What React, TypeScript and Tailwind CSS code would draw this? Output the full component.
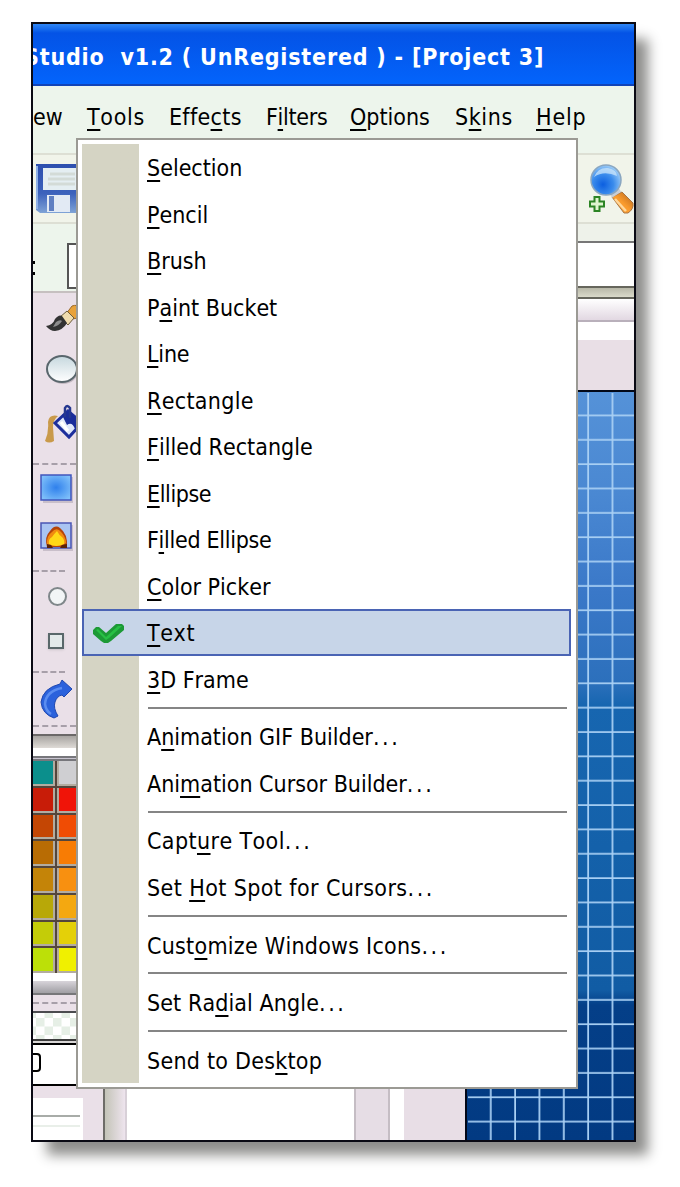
import clsx from "clsx";

const uiFont =
  "font-['DejaVu_Sans_Condensed','DejaVu_Sans',Tahoma,sans-serif] [font-stretch:condensed] [font-kerning:none]";

type Item = { label: string; tracking?: string; checked?: boolean };

// "&" goes before the letter that is underlined
const groups: Item[][] = [
  [
    { label: "&Selection" },
    { label: "&Pencil" },
    { label: "&Brush" },
    { label: "P&aint Bucket" },
    { label: "&Line", tracking: "tracking-[-0.2px]" },
    { label: "&Rectangle", tracking: "tracking-[0.3px]" },
    { label: "&Filled Rectangle" },
    { label: "&Ellipse", tracking: "tracking-[-0.4px]" },
    { label: "F&illed Ellipse", tracking: "tracking-[-0.3px]" },
    { label: "&Color Picker" },
    { label: "&Text", tracking: "tracking-[0.6px]", checked: true },
    { label: "&3D Frame" },
  ],
  [
    { label: "A&nimation GIF Builder..." },
    { label: "Ani&mation Cursor Builder..." },
  ],
  [
    { label: "Capt&ure Tool...", tracking: "tracking-[0.4px]" },
    { label: "Set &Hot Spot for Cursors...", tracking: "tracking-[0.4px]" },
  ],
  [{ label: "Cust&omize Windows Icons...", tracking: "tracking-[0.25px]" }],
  [{ label: "Set Ra&dial Angle...", tracking: "tracking-[0.1px]" }],
  [{ label: "Send to Des&ktop", tracking: "tracking-[0.25px]" }],
];

const menuBar = [
  { label: "ew", width: "w-[54px]" },
  { label: "&Tools", width: "w-[82px] tracking-[0.7px]" },
  { label: "Effe&cts", width: "w-[97px] tracking-[0.3px]" },
  { label: "F&ilters", width: "w-[84px] tracking-[-0.3px]" },
  { label: "&Options", width: "w-[105px]" },
  { label: "S&kins", width: "w-[81px] tracking-[0.6px]" },
  { label: "&Help", width: "w-[60px] tracking-[0.8px]" },
];

const palette = [
  ["bg-[#0b8f8c]", "bg-[#cfcfd2]"],
  ["bg-[#c81c08]", "bg-[#f01408]"],
  ["bg-[#c44604]", "bg-[#f04c04]"],
  ["bg-[#b86c04]", "bg-[#f87c04]"],
  ["bg-[#c48408]", "bg-[#f89010]"],
  ["bg-[#b8a808]", "bg-[#f4a810]"],
  ["bg-[#c4cc08]", "bg-[#e4d008]"],
  ["bg-[#bce008]", "bg-[#f0f000]"],
];

const Mnemonic = ({ text }: { text: string }) => {
  const dots = text.endsWith("...");
  const label = dots ? text.slice(0, -3) : text;
  const i = label.indexOf("&");
  return (
    <>
      {i < 0 ? label : label.slice(0, i)}
      {i >= 0 && (
        <span className="underline decoration-2 underline-offset-4 [text-decoration-skip-ink:none]">
          {label[i + 1]}
        </span>
      )}
      {i >= 0 && label.slice(i + 2)}
      {dots && <span className="tracking-[2.6px]">...</span>}
    </>
  );
};

const SaveIcon = () => (
  <svg width="44" height="52" viewBox="0 0 44 52" className="shrink-0">
    <defs>
      <linearGradient id="save" x1="0" y1="0" x2="0" y2="1">
        <stop offset="0" stopColor="#2d4fae" />
        <stop offset="0.6" stopColor="#3c62bc" />
        <stop offset="1" stopColor="#7fa3d6" />
      </linearGradient>
    </defs>
    <path d="M1 1H44V50H5L1 47Z" fill="url(#save)" />
    <path d="M2 3V46" stroke="#8fb0e8" strokeWidth="2" />
    <rect x="8" y="5" width="36" height="22" fill="#e4eef2" />
    <path d="M15 11H40M13 16H40M13 21H40" stroke="#d3dbd7" strokeWidth="3" />
    <rect x="12" y="32" width="23" height="17" fill="#e2eaf4" />
    <rect x="14" y="33" width="5" height="15" fill="#5f7fc2" />
  </svg>
);

const ZoomInIcon = () => (
  <svg width="48" height="52" viewBox="0 0 48 52" className="shrink-0">
    <defs>
      <radialGradient id="lens" cx="0.4" cy="0.65" r="0.7">
        <stop offset="0" stopColor="#0c5fe0" />
        <stop offset="0.5" stopColor="#3b8cec" />
        <stop offset="1" stopColor="#a9d4f8" />
      </radialGradient>
      <linearGradient id="handle" x1="0" y1="1" x2="1" y2="0">
        <stop offset="0" stopColor="#ffb04a" />
        <stop offset="0.5" stopColor="#f99a2c" />
        <stop offset="1" stopColor="#b0601c" />
      </linearGradient>
    </defs>
    <path d="M26 34L36 29L47 40Q48 46 42 50L38 50Z" fill="url(#handle)" stroke="#a87444" />
    <path d="M29 36L40 48" stroke="#ffd79a" strokeWidth="2.5" />
    <path d="M25 33L34 27" stroke="#c9ced6" strokeWidth="4" />
    <circle cx="20" cy="17" r="15" fill="url(#lens)" stroke="#8aa6c0" strokeWidth="1.5" />
    <path d="M8 14Q12 4 22 5Q31 7 31 13Q18 7 8 14Z" fill="#cbe6fb" opacity="0.75" />
    <path
      d="M8.500 34H13.500V38.500H18V43.500H13.500V48H8.500V43.500H4V38.500H8.500Z"
      fill="#dff5cf"
      stroke="#2c8424"
      strokeWidth="2"
    />
  </svg>
);

const BrushIcon = () => (
  <svg width="34" height="30" viewBox="0 0 34 30">
    <path d="M22 10L28 2Q34 0 34 4V14L28 15Z" fill="#e8a23a" stroke="#9c6a28" />
    <path d="M16 13L23 7L30 14L24 21Z" fill="#f0dcae" stroke="#6b5c3c" />
    <path d="M2 22Q9 21 11 15Q15 10 18 12L23 19Q19 26 11 27Q6 27 2 22Z" fill="#333" />
    <path d="M12 18Q16 15 18 17Q15 22 9 23Z" fill="#8d8d8d" />
  </svg>
);

const EllipseIcon = () => (
  <svg width="32" height="32" viewBox="0 0 32 32">
    <defs>
      <linearGradient id="oval" x1="0" y1="0" x2="0" y2="1">
        <stop offset="0" stopColor="#c6d8de" />
        <stop offset="1" stopColor="#fff" />
      </linearGradient>
    </defs>
    <ellipse cx="17" cy="17" rx="15" ry="13" fill="#c3b9c2" />
    <ellipse cx="16" cy="15" rx="15" ry="13" fill="url(#oval)" stroke="#59666c" strokeWidth="2" />
  </svg>
);

const BucketIcon = () => (
  <svg width="34" height="40" viewBox="0 0 34 40">
    <path d="M1 38Q5 29 4 19Q5 11 14 13Q9 17 9 24L10 38Q5 41 1 38Z" fill="#c99a4a" />
    <path d="M11 20L24 8L38 20L25 34Z" fill="#dfe8fa" stroke="#1d2f9c" strokeWidth="3" />
    <path d="M18 12L25 8L36 20L31 26Q28 18 23 22Z" fill="#1a2d9a" />
    <path d="M21 14V5Q23 1 26 5V15" fill="none" stroke="#24378f" strokeWidth="2.5" />
    <path d="M17 19L24 28" stroke="#fff" strokeWidth="3" />
  </svg>
);

const GradientIcon = () => (
  <svg width="34" height="29" viewBox="0 0 34 29">
    <defs>
      <radialGradient id="blue" cx="0.5" cy="0.5" r="0.6">
        <stop offset="0" stopColor="#2f80ec" />
        <stop offset="1" stopColor="#7fc0fa" />
      </radialGradient>
    </defs>
    <rect x="3" y="3" width="30" height="26" fill="#c9bfca" />
    <rect x="1" y="1" width="30" height="25" fill="url(#blue)" stroke="#4256bc" strokeWidth="1.5" />
  </svg>
);

const FlameIcon = () => (
  <svg width="34" height="29" viewBox="0 0 34 29">
    <rect x="3" y="3" width="30" height="26" fill="#c9bfca" />
    <rect x="1" y="1" width="30" height="25" fill="#a9c4f2" stroke="#4a55b4" strokeWidth="1.5" />
    <path d="M7 25Q4 15 10 9Q15 2 20 6Q28 12 27 25Z" fill="#b4440a" />
    <path d="M7 23Q6 14 12 10Q15 6 19 8Q26 14 26 21Q22 25 7 23Z" fill="#f08a10" />
    <path d="M9 22Q8 17 12 15Q15 11 17 9Q19 13 22 15Q25 18 24 22Q16 26 9 22Z" fill="#ffd818" />
    <path d="M7 26V22L11 23L13 26ZM20 26L22 23L27 22V26Z" fill="#5c2408" />
  </svg>
);

const UndoIcon = () => (
  <svg width="34" height="41" viewBox="0 0 34 41">
    <path
      d="M32 10L22 1L20 5Q3 9 1 23Q2 35 14 39L18 37Q13 29 15 23Q17 17 22 16L24 18Z"
      fill="#2b62dc"
      stroke="#2048b0"
    />
    <path d="M22 9Q6 12 5 25Q6 32 11 35" fill="none" stroke="#5b8df0" strokeWidth="2.5" />
  </svg>
);

const CheckIcon = () => (
  <svg width="34" height="24" viewBox="0 0 34 24">
    <path d="M1 8L4 5H7L14 11L24 2H30L32 4V8L19 19L16 21H12L9 19L1 12Z" fill="#1c9a36" />
    <path d="M4 8L6 7L14 15L26 4L30 4L17 16L14 18Z" fill="#27c044" />
  </svg>
);

const Checkerboard = () => (
  <svg width="43" height="26" className="shrink-0">
    <defs>
      <pattern id="checker" width="17" height="17" patternUnits="userSpaceOnUse" x="3" y="5">
        <rect width="17" height="17" fill="#fff" />
        <rect width="8.5" height="8.5" fill="#e6efe6" />
        <rect x="8.5" y="8.5" width="8.5" height="8.5" fill="#e6efe6" />
      </pattern>
    </defs>
    <rect width="43" height="26" fill="url(#checker)" />
  </svg>
);

const Canvas = () => (
  <svg width="169" height="750" className="shrink-0">
    <defs>
      <linearGradient id="sky" x1="0" y1="0" x2="0" y2="1">
        <stop offset="0" stopColor="#5592d8" />
        <stop offset="0.14" stopColor="#4a88d2" />
        <stop offset="0.27" stopColor="#3a78c8" />
        <stop offset="0.39" stopColor="#2c70bc" />
        <stop offset="0.42" stopColor="#1766b0" />
        <stop offset="0.8" stopColor="#115ca4" />
        <stop offset="0.82" stopColor="#043f88" />
        <stop offset="1" stopColor="#023a82" />
      </linearGradient>
      <pattern id="grid" x="2.3" y="2" width="24.35" height="24.35" patternUnits="userSpaceOnUse">
        <path d="M24.3 0V24.35M0 24.3H24.35" stroke="#a9d0f4" strokeWidth="3.4" />
      </pattern>
    </defs>
    <rect width="169" height="750" fill="url(#sky)" />
    <rect x="3" y="3" width="166" height="747" fill="url(#grid)" />
    <path d="M0 1H169M1 0V750" stroke="#020818" strokeWidth="2" />
  </svg>
);

const Dashes = ({ className }: { className?: string }) => (
  <div className={clsx("h-0 w-[43px] border-t-2 border-dashed border-[#a79fa9]", className)} />
);

// Toolbox, palette and status boxes down the left edge
const Toolbox = () => (
  <div className="flex w-[70px] shrink-0 flex-col bg-[#eae0e8]">
    <div className="flex h-[69px] shrink-0 items-center border-b-2 border-[#c6c0c0] bg-[#edf5ec]">
      <div className="flex w-[34px] flex-col gap-2 pt-5">
        <span className="h-[3px] w-0.5 bg-black" />
        <span className="h-[3px] w-0.5 bg-black" />
      </div>
      <div className="mt-4 h-[46px] w-9 border-2 border-[#555] bg-white" />
    </div>
    <div className="flex h-[170px] shrink-0 flex-col pl-[11px] pt-[11px]">
      <BrushIcon />
      <div className="ml-0.5 mt-5">
        <EllipseIcon />
      </div>
      <div className="mt-[17px]">
        <BucketIcon />
      </div>
    </div>
    <Dashes />
    <div className="flex h-[105px] shrink-0 flex-col gap-[19px] pl-[7px] pt-[9px]">
      <GradientIcon />
      <FlameIcon />
    </div>
    <Dashes className="w-8!" />
    <div className="flex h-[99px] shrink-0 flex-col items-start gap-[27px] pl-[15px] pt-[15px]">
      <span className="size-[19px] rounded-full border-2 border-[#7f878a] bg-[#f2f5f6]" />
      <span className="size-4 border-2 border-[#59686a] bg-[#e3eaea] shadow-sm" />
    </div>
    <Dashes className="w-8!" />
    <div className="h-[52px] shrink-0 pl-[7px] pt-1.5">
      <UndoIcon />
    </div>
    <Dashes />
    <div className="mt-[7px] h-[14px] shrink-0 border-t-2 border-[#6b6868] bg-linear-to-b from-[#a8a5a2] to-[#dedad6]" />
    <div className="h-2 shrink-0 bg-white" />
    <div className="h-[5px] shrink-0 border-y-2 border-[#77777c] bg-[#c8c4d0]" />
    <div className="grid h-[212px] w-[43px] shrink-0 grid-cols-[22px_1fr] grid-rows-8 gap-x-0.5 gap-y-0.5 bg-[#54463c]">
      {palette.map(([a, b], i) => [
        <div key={`a${i}`} className={clsx("border-r-2 border-b-2 border-[#b3aca0]", a)} />,
        <div key={`b${i}`} className={clsx("border-l-2 border-b-2 border-[#b3aca0]", b)} />,
      ])}
    </div>
    <div className="h-2 shrink-0 bg-white" />
    <div className="h-[14px] shrink-0 border-b-2 border-[#77777a] bg-linear-to-b from-[#d8d4da] to-[#a09fa4]" />
    <div className="h-[18px] shrink-0 border-b-2 border-[#4b4b4f] pt-[7px]">
      <Dashes />
    </div>
    <Checkerboard />
    <div className="h-1 shrink-0 border-t-2 border-[#3c3c3c] bg-[#d8d6d6]" />
    <div className="h-[43px] w-11 shrink-0 overflow-hidden border-y-2 border-black bg-white">
      <div className="-ml-1 mt-2 h-[19px] w-3 rounded-sm border-2 border-black" />
    </div>
    <div className="mt-3 w-[50px] flex-1 bg-white pt-[17px]">
      <div className="h-0.5 w-[47px] bg-[#a8aca8]" />
      <div className="mt-2 h-0.5 w-[47px] bg-[#e9efe9]" />
    </div>
  </div>
);

const Workspace = () => (
  <div className="flex flex-1 flex-col">
    <div className="h-[19px] shrink-0 border-b-2 border-[#777] bg-[#eef2ea]" />
    <div className="h-[43px] shrink-0 bg-white" />
    <div className="h-[13px] shrink-0 border-t-2 border-b-2 border-[#66665c] bg-linear-to-b from-[#b8b8a8] to-[#dadaca]" />
    <div className="h-[23px] shrink-0 border-b-2 border-[#b9b0bb] bg-linear-to-b from-white to-[#e2d8e2]" />
    <div className="h-[18px] shrink-0 bg-white" />
    <div className="h-[50px] shrink-0 bg-[#e9dfe6]" />
    <div className="flex flex-1 bg-white">
      <div className="w-6 border-r-2 border-l-2 border-l-[#6e6c68] border-r-[#d8d0d8] bg-linear-to-r from-[#c4c4b8] to-[#eee4ee]" />
      <div className="w-[227px]" />
      <div className="w-9 border-x-2 border-[#c5bdc4] bg-[#e6dde5]" />
      <div className="w-[14px]" />
      <div className="flex-1 bg-[#e8dee6]" />
      <Canvas />
    </div>
  </div>
);

const ToolsMenu = () => (
  <div className="absolute left-[43px] top-[114px] w-[502px] border-2 border-[#9b9a94] bg-white py-1 pl-1 pr-[5px]">
    <div className="bg-linear-to-r from-[#d5d4c4] from-[57px] to-white to-[57px]">
      {groups.map((group, g) => (
        <div key={g}>
          {g > 0 && (
            <div className="ml-[66px] mr-1 flex h-[11.1px] items-center">
              <div className="h-0.5 w-full bg-[#858585]" />
            </div>
          )}
          {group.map(({ label, tracking, checked }) => (
            <div
              key={label}
              className={clsx(
                "flex h-[46.5px] items-center",
                checked && "bg-[#c7d5e8] outline-2 -outline-offset-2 outline-[#4a64b4]"
              )}
            >
              <div className="w-[65px] pl-2.5 pt-1">{checked && <CheckIcon />}</div>
              <span className={clsx("whitespace-pre pt-[3px] text-[23px] leading-none", tracking)}>
                <Mnemonic text={label} />
              </span>
            </div>
          ))}
        </div>
      ))}
    </div>
  </div>
);

export default function App() {
  return (
    <div className={clsx("h-[1187px] w-[680px] overflow-hidden bg-white pl-[31px] pt-[22px] text-black", uiFont)}>
      <div className="h-[1120px] w-[605px] border-2 border-[#0a0a14] shadow-[14px_15px_12px_-2px_#8e8e8c]">
        <div className="relative flex h-full flex-col overflow-hidden">
          <div className="flex h-[62px] shrink-0 items-center border-b-2 border-[#1144b8] bg-linear-to-b from-[#2f86f4] via-[#0453e6] via-15% to-[#0364fc] pt-1.5">
            <span className="-ml-[9px] whitespace-pre text-[23px] leading-none font-bold tracking-[0.8px] text-white">
              {"Studio  v1.2 ( UnRegistered ) - [Project 3]"}
            </span>
          </div>
          <div className="flex h-[67px] shrink-0 items-start bg-[#edf5ec] pt-5">
            {menuBar.map(({ label, width }) => (
              <span key={label} className={clsx("shrink-0 whitespace-pre text-[23px] leading-none", width)}>
                <Mnemonic text={label} />
              </span>
            ))}
          </div>
          <div className="flex h-[71px] shrink-0 items-center justify-between border-y-2 border-[#dddfd4] bg-[#f1f4ea] pl-0.5">
            <SaveIcon />
            <ZoomInIcon />
          </div>
          <div className="flex min-h-0 flex-1">
            <Toolbox />
            <Workspace />
          </div>
          <ToolsMenu />
        </div>
      </div>
    </div>
  );
}
